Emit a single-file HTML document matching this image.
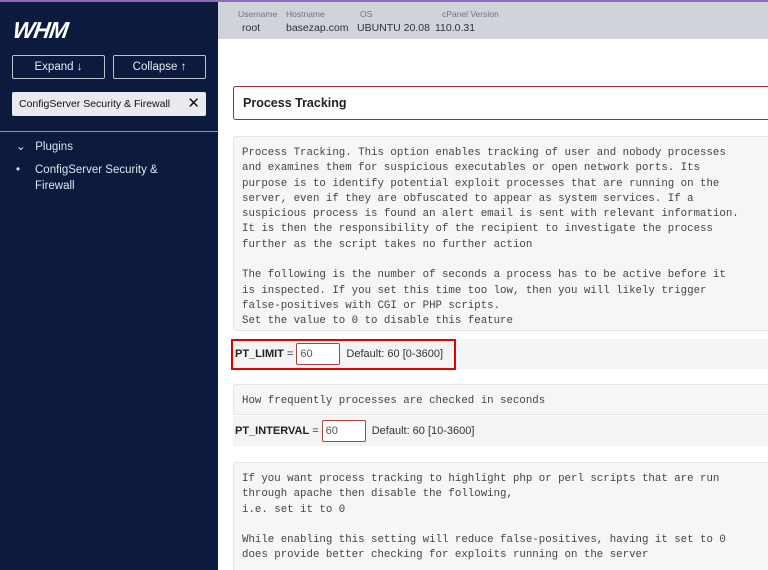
<!DOCTYPE html>
<html><head><style>
*{margin:0;padding:0;box-sizing:border-box}
html,body{width:768px;height:570px;overflow:hidden}
body{background:#fff;font-family:"Liberation Sans",sans-serif;position:relative}
.top{position:absolute;left:0;top:0;width:768px;height:2px;background:#8e6bb8}
.side{position:absolute;left:0;top:2px;width:218px;height:568px;background:#0b1a3d;color:#dfe3ec}
.logo{position:absolute;left:13px;top:15px;font:italic 900 23px "Liberation Sans",sans-serif;color:#fff;letter-spacing:-1px;transform:skewX(-8deg)}
.btn{position:absolute;top:53px;height:24px;border:1px solid #b8c0d0;border-radius:2px;font-size:11.5px;color:#e8ebf2;text-align:center;line-height:22px}
.search{position:absolute;left:12px;top:90px;width:194px;height:24px;background:#e8eaf0;border-radius:2px;color:#111;font-size:10.5px;line-height:24px;padding-left:7px}
.search span{position:absolute;right:6px;top:0;font-size:15px}
.hr{position:absolute;left:0;top:129px;width:218px;height:1px;background:#8a94aa}
.hdr{position:absolute;left:218px;top:2px;width:550px;height:37px;background:#d0d3da;font-size:8.5px;color:#6d7280}
.hdr div{position:absolute;top:7px}
.hdr b{position:absolute;top:20px;font-weight:normal;font-size:10.5px;color:#2b3140}
.title{position:absolute;left:233px;top:86px;width:540px;height:34px;border:1px solid #a52a2a;border-radius:3px;font-weight:bold;font-size:12.5px;color:#222;padding:9px 0 0 9px}
.box{position:absolute;left:233px;width:540px;background:#f6f6f6;border:1px solid #e6e6e6;border-radius:3px;font:10.75px/15.3px "Liberation Mono",monospace;color:#444;padding:9px 0 0 8px;white-space:pre;overflow:hidden}
.row{position:absolute;left:233px;width:540px;background:#f4f4f4;font-size:11px;color:#333;padding-left:2px}
.row b{color:#222}
.inp{display:inline-block;width:44px;height:22px;border:1px solid #b04040;border-radius:2px;background:#fff;color:#555;padding:3px 0 0 3px;vertical-align:middle;margin:0 3px}
.hl{position:absolute;left:231px;top:339px;width:225px;height:31px;border:2px solid #e00000}
</style></head><body>
<div class="top"></div>
<div class="side">
<div class="logo">WHM</div>
<div class="btn" style="left:12px;width:93px">Expand &#8595;</div>
<div class="btn" style="left:113px;width:93px">Collapse &#8593;</div>
<div class="search">ConfigServer Security &amp; Firewall<span>✕</span></div>
<div class="hr"></div>
<div style="position:absolute;left:16px;top:137px;font-size:11.5px">&#8964;&nbsp;&nbsp; Plugins</div>
<div style="position:absolute;left:16px;top:160px;font-size:11.5px;line-height:16px">•</div>
<div style="position:absolute;left:35px;top:160px;font-size:11.5px;line-height:16px;width:140px">ConfigServer Security &amp; Firewall</div>
</div>
<div class="hdr">
<div style="left:20px">Username</div><b style="left:24px">root</b>
<div style="left:68px">Hostname</div><b style="left:68px">basezap.com</b>
<div style="left:142px">OS</div><b style="left:139px">UBUNTU 20.08</b>
<div style="left:224px">cPanel Version</div><b style="left:217px">110.0.31</b>
</div>
<div class="title">Process Tracking</div>
<div class="box" style="top:136px;height:195px">Process Tracking. This option enables tracking of user and nobody processes
and examines them for suspicious executables or open network ports. Its
purpose is to identify potential exploit processes that are running on the
server, even if they are obfuscated to appear as system services. If a
suspicious process is found an alert email is sent with relevant information.
It is then the responsibility of the recipient to investigate the process
further as the script takes no further action

The following is the number of seconds a process has to be active before it
is inspected. If you set this time too low, then you will likely trigger
false-positives with CGI or PHP scripts.
Set the value to 0 to disable this feature</div>
<div class="row" style="top:339px;height:30px;line-height:30px"><b>PT_LIMIT</b> =<span class="inp" style="line-height:14px">60</span> Default: 60 [0-3600]</div>
<div class="hl"></div>
<div class="box" style="top:384px;height:31px">How frequently processes are checked in seconds</div>
<div class="row" style="top:416px;height:30px;line-height:30px"><b>PT_INTERVAL</b> =<span class="inp" style="line-height:14px">60</span> Default: 60 [10-3600]</div>
<div class="box" style="top:462px;height:120px">If you want process tracking to highlight php or perl scripts that are run
through apache then disable the following,
i.e. set it to 0

While enabling this setting will reduce false-positives, having it set to 0
does provide better checking for exploits running on the server</div>
</body></html>
